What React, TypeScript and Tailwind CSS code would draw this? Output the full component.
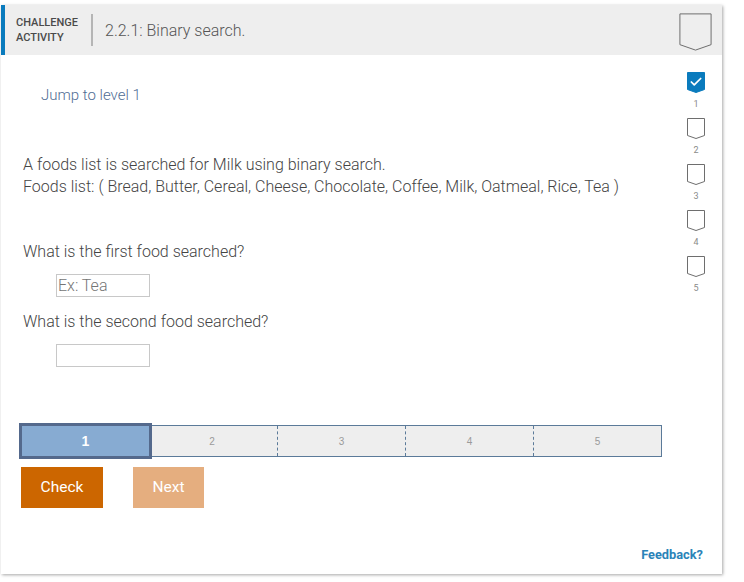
import { Check } from "lucide-react";

function Badge({ size = "small", done = false }: { size?: "small" | "large"; done?: boolean }) {
  const cls = size === "large" ? "w-[33px] h-[38px]" : "w-[18px] h-[21px]";
  return (
    <div className={`relative ${cls}`}>
      <svg viewBox="0 0 18 21" className="w-full h-full" preserveAspectRatio="none">
        <path
          d="M0.5 0.5H17.5V17.5L9 20.5L0.5 17.5Z"
          fill={done ? "#0a7bbd" : size === "large" ? "#eeeeee" : "#fff"}
          stroke={done ? "#0a7bbd" : "#6e6e6e"}
          strokeWidth="1"
          vectorEffect="non-scaling-stroke"
        />
      </svg>
      {done && (
        <Check className="absolute left-[2px] top-[3px] w-[14px] h-[14px] text-white" strokeWidth={3} />
      )}
    </div>
  );
}

const levels = [1, 2, 3, 4, 5];

export default function App() {
  return (
    <div className="w-[744px] h-[582px] bg-white pt-[5px] pl-[1px] font-['Roboto',sans-serif]">
      <div className="w-[721px] h-[569px] bg-white shadow-[1px_1px_3px_rgba(0,0,0,0.35)] flex flex-col">
        <div className="h-[50px] shrink-0 bg-[#eeeeee] border-l-[4px] border-[#0a7bbd] flex items-center pl-[11px] pr-[10px]">
          <div className="w-[65px] text-[11px] leading-[15px] font-medium text-[#4a4a4a]">
            CHALLENGE
            <br />
            ACTIVITY
          </div>
          <div className="w-[2px] h-[32px] bg-[#b5b5b5] ml-[10px]" />
          <div className="ml-[12px] pt-[2px] text-[16px] font-light text-[#555555]">2.2.1: Binary search.</div>
          <div className="ml-auto mt-[3px]">
            <Badge size="large" />
          </div>
        </div>

        <div className="flex flex-1">
          <div className="w-[661px] flex flex-col">
            <div className="pl-[40px] pt-[30px] text-[15px] leading-[20px] text-[#4f6d94] font-light">
              Jump to level 1
            </div>
            <div className="pl-[22px] pt-[49px] text-[16px] leading-[22px] font-light text-[#444444]">
              <p>A foods list is searched for Milk using binary search.</p>
              <p>Foods list: ( Bread, Butter, Cereal, Cheese, Chocolate, Coffee, Milk, Oatmeal, Rice, Tea )</p>
            </div>
            <div className="pl-[22px] pt-[43px] text-[16px] leading-[22px] font-light text-[#444444]">
              <p>What is the first food searched?</p>
              <input
                readOnly
                placeholder="Ex: Tea"
                className="block mt-[11px] ml-[33px] w-[94px] h-[23px] border border-[#c8c8c8] px-[1px] text-[16px] font-light outline-none placeholder:text-[#757575]"
              />
              <p className="mt-[14px]">What is the second food searched?</p>
              <input
                readOnly
                className="block mt-[11px] ml-[33px] w-[94px] h-[23px] border border-[#c8c8c8] px-[1px] outline-none"
              />
            </div>
            <div className="mt-[58px] ml-[19px] w-[642px] h-[32px] flex items-stretch bg-[#eeeeee] border border-[#5b7a99]">
              <div className="w-[133px] shrink-0 -ml-[2px] -my-[3px] bg-[#87abd2] border-[3px] border-[#54698c] flex items-center justify-center text-[14px] font-bold text-white font-['Liberation_Sans',sans-serif]">
                1
              </div>
              <div className="w-[125px] shrink-0 pr-[5px] flex items-center justify-center text-[10px] text-[#9a9a9a] font-['Liberation_Sans',sans-serif]">
                2
              </div>
              {levels.slice(2).map((n) => (
                <div
                  key={n}
                  className="w-[128px] shrink-0 flex items-center justify-center text-[10px] text-[#9a9a9a] font-['Liberation_Sans',sans-serif] border-l border-dashed border-[#5b7a99]"
                >
                  {n}
                </div>
              ))}
            </div>
            <div className="flex gap-[30px] mt-[10px] ml-[20px]">
              <button className="w-[82px] h-[41px] bg-[#cc6600] text-white text-[15.5px] font-normal">
                Check
              </button>
              <button className="w-[71px] h-[41px] bg-[#e5ae7f] text-white text-[15.5px] font-normal">
                Next
              </button>
            </div>
          </div>
          <div className="w-[60px] flex flex-col items-center pt-[17px] pl-[8px]">
            {levels.map((n) => (
              <div key={n} className="h-[46px] flex flex-col items-center">
                <Badge done={n === 1} />
                <span className="mt-[5px] text-[9px] leading-[12px] text-[#8a8a8a]">{n}</span>
              </div>
            ))}
          </div>
        </div>
        <div className="h-[31px] shrink-0 flex justify-end pr-[19px] pt-[4px] text-[12.8px] leading-[16px] font-bold text-[#2a83b8]">
          <span>Feedback?</span>
        </div>
      </div>
    </div>
  );
}
